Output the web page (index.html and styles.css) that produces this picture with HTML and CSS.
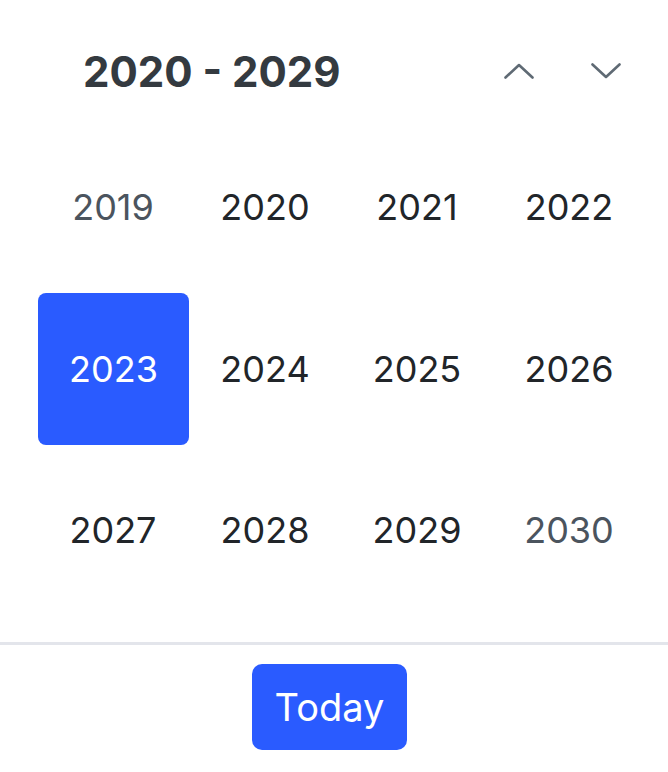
FILE: index.html
```html
<!DOCTYPE html>
<html>
<head>
<meta charset="utf-8">
<link rel="stylesheet" href="styles.css">
</head>
<body>
<div class="picker">
  <div class="header">
    <div class="title">2020 - 2029</div>
    <div class="navs">
      <button class="nav" aria-label="Previous decade">
        <svg width="30" height="16" viewBox="0 0 30 16"><polyline points="1.5,14.5 15,2 28.5,14.5" fill="none" stroke="currentColor" stroke-width="2.6" stroke-linecap="round" stroke-linejoin="round"/></svg>
      </button>
      <button class="nav" aria-label="Next decade">
        <svg width="30" height="16" viewBox="0 0 30 16"><polyline points="1.5,1.5 15,14 28.5,1.5" fill="none" stroke="currentColor" stroke-width="2.6" stroke-linecap="round" stroke-linejoin="round"/></svg>
      </button>
    </div>
  </div>
  <div class="grid">
    <div class="year muted">2019</div>
    <div class="year">2020</div>
    <div class="year">2021</div>
    <div class="year">2022</div>
    <div class="year selected">2023</div>
    <div class="year">2024</div>
    <div class="year">2025</div>
    <div class="year">2026</div>
    <div class="year">2027</div>
    <div class="year">2028</div>
    <div class="year">2029</div>
    <div class="year muted">2030</div>
  </div>
  <div class="divider"></div>
  <div class="footer">
    <button class="today">Today</button>
  </div>
</div>
</body>
</html>
```
FILE: styles.css
```css
html, body {
  margin: 0;
  padding: 0;
  background: #ffffff;
}
body {
  font-family: Inter, "Noto Sans", sans-serif;
}
.picker {
  width: 668px;
}
.header {
  display: flex;
  align-items: center;
  justify-content: space-between;
  height: 62px;
  padding: 40px 47px 0 83px;
}
.title {
  font-size: 42px;
  font-weight: 700;
  color: #343a40;
}
.navs {
  display: flex;
  gap: 57px;
}
.nav {
  display: flex;
  border: 0;
  background: none;
  padding: 0;
  color: #5f6a74;
  cursor: pointer;
}
.grid {
  display: grid;
  grid-template-columns: repeat(4, 152px);
  grid-auto-rows: 152px;
  row-gap: 9.5px;
  margin: 29px 0 0 37px;
}
.year {
  display: flex;
  align-items: center;
  justify-content: center;
  font-size: 36px;
  color: #212529;
  border-radius: 8px;
}
.year.muted {
  color: #4b545e;
}
.year.selected {
  background: #2a5bff;
  color: #ffffff;
  margin-left: 1px;
}
.divider {
  height: 3px;
  background: #e3e5eb;
  margin-top: 36px;
}
.footer {
  display: flex;
  justify-content: center;
  padding: 19px 9px 0 0;
}
.today {
  width: 155px;
  height: 86px;
  border: 0;
  border-radius: 10px;
  background: #2a5bff;
  color: #ffffff;
  font-family: Inter, "Noto Sans", sans-serif;
  font-size: 38px;
  padding: 0;
}
```
